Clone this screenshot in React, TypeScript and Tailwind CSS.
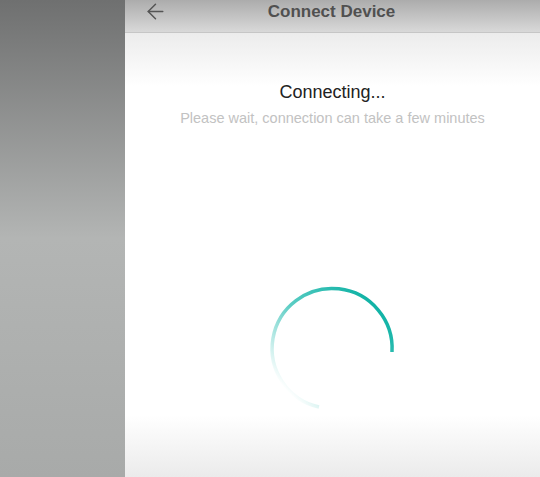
import { ArrowLeft } from "lucide-react";

function Spinner() {
  // arc from 3 o'clock, counterclockwise through top and left, fading out near the bottom
  return (
    <svg width="130" height="130" viewBox="0 0 130 130" className="block">
      <defs>
        <linearGradient id="fade" x1="1" y1="0.3" x2="0.25" y2="1">
          <stop offset="0" stopColor="#12b3a6" />
          <stop offset="0.5" stopColor="#5ccdc4" />
          <stop offset="1" stopColor="#5ccdc4" stopOpacity="0" />
        </linearGradient>
      </defs>
      <path
        d="M 125 68 A 60 60 0 1 0 52 123"
        fill="none"
        stroke="url(#fade)"
        strokeWidth="3.5"
      />
    </svg>
  );
}

export default function App() {
  return (
    <div className="flex h-[477px] w-[540px] overflow-hidden font-['Liberation_Sans',Arial,sans-serif]">
      <div className="w-[125px] shrink-0 bg-gradient-to-b from-[#6f7070] via-[#b3b5b4] via-50% to-[#a8aaa9]" />
      <div className="flex flex-1 flex-col bg-white">
        <div className="flex h-[33px] shrink-0 items-center border-b border-[#c6c6c6] bg-gradient-to-b from-[#acacac] to-[#d9d9d9] pl-[18px] pr-5">
          <ArrowLeft className="-mt-[9px] h-[25px] w-[25px] text-[#555]" strokeWidth={1.4} />
          <h1 className="-mt-[8px] flex-1 pr-[25px] text-center text-[17px] font-bold text-[#505050]">Connect Device</h1>
        </div>
        <div className="flex flex-1 flex-col items-center bg-gradient-to-b from-[#ececec] via-white via-[12%] to-white">
          <p className="mt-[46px] text-[18px] text-[#222]">Connecting...</p>
          <p className="mt-[2px] text-[14.5px] text-[#c2c2c2]">Please wait, connection can take a few minutes</p>
          <div className="mt-[154px] mr-[1px]">
            <Spinner />
          </div>
          <div className="mt-auto h-[62px] w-full bg-gradient-to-b from-white to-[#ebebeb]" />
        </div>
      </div>
    </div>
  );
}
